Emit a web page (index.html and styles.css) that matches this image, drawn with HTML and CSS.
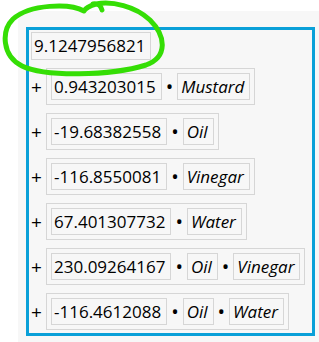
FILE: index.html
```html
<!DOCTYPE html>
<html>
<head>
 <title>Regression terms</title>
 <link rel="stylesheet" href="styles.css">
</head>
<body>
 <div class="panel">
 <div class="frame">
 <div class="result"><span class="num">9.1247956821</span></div>

 <div class="row">
 <span class="plus">+</span>
 <div class="term">
 <span class="box num">0.943203015</span>
 <span class="dot">&bull;</span>
 <span class="box var">Mustard</span>
 </div>
 </div>
 <div class="row">
 <span class="plus">+</span>
 <div class="term">
 <span class="box num">-19.68382558</span>
 <span class="dot">&bull;</span>
 <span class="box var">Oil</span>
 </div>
 </div>
 <div class="row">
 <span class="plus">+</span>
 <div class="term">
 <span class="box num">-116.8550081</span>
 <span class="dot">&bull;</span>
 <span class="box var">Vinegar</span>
 </div>
 </div>
 <div class="row">
 <span class="plus">+</span>
 <div class="term">
 <span class="box num">67.401307732</span>
 <span class="dot">&bull;</span>
 <span class="box var">Water</span>
 </div>
 </div>
 <div class="row">
 <span class="plus">+</span>
 <div class="term">
 <span class="box num">230.09264167</span>
 <span class="dot">&bull;</span>
 <span class="box var">Oil</span>
 <span class="dot">&bull;</span>
 <span class="box var">Vinegar</span>
 </div>
 </div>
 <div class="row">
 <span class="plus">+</span>
 <div class="term">
 <span class="box num">-116.4612088</span>
 <span class="dot">&bull;</span>
 <span class="box var">Oil</span>
 <span class="dot">&bull;</span>
 <span class="box var">Water</span>
 </div>
 </div>
 </div>
 </div>

 <!-- marker circle drawn over the intercept -->
 <svg class="scribble" width="180" height="80" viewBox="0 0 180 80">
 <path d="M84 11 C70 3, 30 4, 13 19 C1 31, 2 56, 22 66 C45 77, 110 76, 146 65 C168 57, 166 36, 150 20 C135 6, 112 1, 96 4 C89 6, 85 9, 84 11 M93 4 C98 3, 101 6, 102 10" />
 </svg>
</body>
</html>
```

FILE: styles.css
```css
/* page */
body {
margin: 0;
background-color: #fff;
font-family: "Open Sans", "Noto Sans", sans-serif;
font-size: 17px;
color: #000;
}
.panel {
margin: 11px 0 0 18px;
padding: 16px 4px 6px 8px;
background-color: #f7f7f7;
}
.frame {
border: 3px solid #0aa0d8;
padding: 2px 2px 3px 2px;
display: flex;
flex-direction: column;
align-items: flex-start;
gap: 8px;
}
.result {
border: 1px solid #d6d6d6;
line-height: 26px;
padding: 0 5px 0 2px;
}
.row {
display: flex;
align-items: center;
}
.plus {
width: 15px;
font-size: 19px;
line-height: 20px;
}
.term {
display: flex;
align-items: center;
border: 1px solid #d6d6d6;
padding: 4px;
}
.box {
border: 1px solid #d6d6d6;
line-height: 25px;
padding: 0 3px 0 2px;
}
.box.num {
padding-right: 5px;
}
.box.var {
padding: 0 5px 0 3px;
font-style: italic;
}
.dot {
margin: 0 4px;
font-size: 20px;
line-height: 20px;
}
.scribble {
position: absolute;
left: 0;
top: 0;
fill: none;
stroke: #35de05;
stroke-width: 5;
stroke-linecap: round;
stroke-linejoin: round;
}
```
